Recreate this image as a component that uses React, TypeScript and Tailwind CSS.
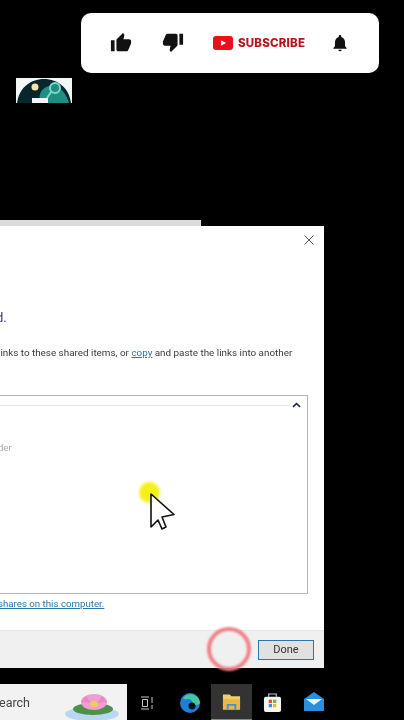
import { MdThumbUp, MdThumbDown, MdNotifications } from "react-icons/md";

const uiFont = { fontFamily: 'Roboto, "Noto Sans", sans-serif' };

const SubscribeCard = () => (
  <div className="ml-[81px] flex h-[60px] w-[298px] items-center rounded-[10px] bg-white text-black">
    <MdThumbUp className="ml-[29px] h-[22px] w-[22px] text-[#111]" />
    <MdThumbDown className="ml-[30px] mb-[2px] h-[22px] w-[22px] text-[#111]" />
    <svg viewBox="0 0 20 14" className="ml-[29px] h-[14px] w-[20px]">
      <rect width="20" height="14" rx="3" fill="#e8101a" />
      <path d="M8 4.2 L13 7 L8 9.8 Z" fill="#fff" />
    </svg>
    <span className="ml-[5px] mt-[2px] font-['Inter',sans-serif] text-[11.5px] font-extrabold tracking-[0.2px] text-[#b5141c]">
      SUBSCRIBE
    </span>
    <MdNotifications className="ml-[25px] h-[20px] w-[20px] text-[#111]" />
  </div>
);

const ChannelLogo = () => (
  <svg viewBox="0 0 56 25" className="ml-[16px] mt-[5px] block h-[25px] w-[56px]">
    <rect width="56" height="25" fill="#f1f8f6" />
    <path d="M1 25 C3 10 14 1 28 1 C42 1 53 10 55 25 Z" fill="#08262b" />
    <path d="M24 25 C22 14 27 9 34 8 C42 6 50 14 53 25 Z" fill="#1c8f80" />
    <circle cx="19" cy="9" r="3.5" fill="#f4e5b0" />
    <circle cx="39" cy="10" r="5" fill="#1c8f80" stroke="#7fd8cc" strokeWidth="2" />
    <path d="M35 14 L31 20" stroke="#7fd8cc" strokeWidth="2" />
    <rect x="16" y="20" width="16" height="5" fill="#eef6f6" />
  </svg>
);

const ShareDialog = () => (
  <div className="flex h-[442px] w-[324px] flex-col bg-white" style={uiFont}>
    <div className="flex h-[404px] flex-col">
      <div className="flex justify-end pr-[9px] pt-[8px]">
        <svg viewBox="0 0 12 12" className="h-[12px] w-[12px]" fill="none" stroke="#555" strokeWidth="1">
          <path d="M1.5 1.5 L10.5 10.5 M10.5 1.5 L1.5 10.5" />
        </svg>
      </div>
      <p className="ml-[-4px] mt-[63px] text-[13px] leading-[18px] text-[#3a4070]">d.</p>
      <p className="ml-[-2px] mt-[18px] whitespace-nowrap text-[9.87px] leading-[16px] text-[#3a3a3a]">
        links to these shared items, or{" "}
        <span className="text-[#2a75a8] underline">copy</span> and paste the links into another
      </p>
      <div className="mt-[34px] h-[199px] w-[308px] border border-l-0 border-[#b4b4b4]">
        <div className="flex h-[19px] items-center justify-between pr-[6px]">
          <div className="h-px w-[288px] bg-[#e4e6f2]" />
          <svg viewBox="0 0 10 6" className="mb-[1px] h-[6px] w-[9px]" fill="none" stroke="#1c2c4c" strokeWidth="1.8">
            <path d="M1 5 L5 1.5 L9 5" />
          </svg>
        </div>
        <p className="ml-[-2px] mt-[26px] text-[9.5px] leading-[14px] text-[#a8a8a8]">der</p>
      </div>
      <p className="ml-[-2px] mt-[2px] whitespace-nowrap text-[9.7px] leading-[15px] text-[#2a75a8] underline">
        shares on this computer.
      </p>
    </div>
    <div className="flex h-[38px] items-center justify-end border-t border-[#e8e8e8] bg-[#f0f0f0] pr-[10px]">
      <button className="h-[20px] w-[56px] border border-[#2b74ac] bg-[#e1e1e1] text-[11px] leading-[17px] text-[#333]">
        Done
      </button>
    </div>
  </div>
);

const Lotus = () => (
  <svg viewBox="0 0 56 26" className="h-[26px] w-[56px]">
    <ellipse cx="28" cy="20" rx="27" ry="7" fill="#b9d8ef" />
    <ellipse cx="29" cy="15" rx="20" ry="6" fill="#4f8f4c" />
    <ellipse cx="30" cy="8" rx="13" ry="8" fill="#ee9fd0" />
    <ellipse cx="30" cy="10" rx="4" ry="3" fill="#f5c860" />
    <path d="M22 2 L27 9 L17 8 Z M38 2 L33 9 L43 8 Z" fill="#e78ac4" />
  </svg>
);

const Taskbar = () => (
  <div className="mt-[16px] flex h-[36px] items-stretch" style={uiFont}>
    <div className="flex w-[127px] items-center justify-between bg-[#f2f2f2] pr-[7px]">
      <span className="ml-[-1px] mt-[2px] text-[12.5px] text-[#444]">earch</span>
      <div className="mt-[10px]">
        <Lotus />
      </div>
    </div>
    <div className="flex w-[40px] items-center justify-center pt-[2px]">
      <svg viewBox="0 0 14 14" className="h-[14px] w-[14px]" fill="none" stroke="#c8c8c8" strokeWidth="1">
        <path d="M1 1 H9 M1 13 H9 M2.5 3.5 H7.5 V10.5 H2.5 Z M12 1 V7 M12 9 V13" />
      </svg>
    </div>
    <div className="flex w-[45px] items-center justify-center pt-[1px]">
      <svg viewBox="0 0 20 20" className="h-[20px] w-[20px]">
        <circle cx="10" cy="10" r="10" fill="#1f7fd6" />
        <path d="M3 5 C7 -1 18 0 20 9 C20 12 16 13 12 12 C14 9 11 6 8 6 C6 6 4 7 3 5 Z" fill="#43c8a0" />
        <circle cx="12" cy="13" r="3.5" fill="#06121c" />
      </svg>
    </div>
    <div className="ml-[-1px] flex w-[41px] items-center justify-center border-b border-[#888] bg-[#333]">
      <svg viewBox="0 0 20 18" className="h-[18px] w-[19px]">
        <path d="M1 1 H8 L10 3 H19 V17 H1 Z" fill="#f3cd66" />
        <path d="M1 6 H19 V17 H1 Z" fill="#e8b84f" />
        <path d="M5 17 V11 H15 V17 H13 V13 H7 V17 Z" fill="#4a90c8" />
      </svg>
    </div>
    <div className="flex w-[40px] items-center justify-center">
      <svg viewBox="0 0 20 22" className="h-[21px] w-[19px]">
        <path d="M6 5 V2 H14 V5" fill="none" stroke="#bcd" strokeWidth="1.2" />
        <rect x="1" y="5" width="18" height="16" rx="2" fill="#f5f5f5" />
        <rect x="6" y="8" width="3.5" height="3.5" fill="#e2512a" />
        <rect x="10.5" y="8" width="3.5" height="3.5" fill="#7db53b" />
        <rect x="6" y="12.5" width="3.5" height="3.5" fill="#2a9ae0" />
        <rect x="10.5" y="12.5" width="3.5" height="3.5" fill="#f4b81f" />
      </svg>
    </div>
    <div className="ml-[2px] flex w-[40px] items-center justify-center">
      <svg viewBox="0 0 20 20" className="h-[20px] w-[20px]">
        <path d="M10 0 L20 7 V19 H0 V7 Z" fill="#2b8fe0" />
        <path d="M2 7 H18 L10 13 Z" fill="#e8f4fc" />
      </svg>
    </div>
  </div>
);

export default function App() {
  return (
    <div className="relative h-[720px] w-[404px] overflow-hidden bg-black pt-[13px] blur-[0.4px]">
      <SubscribeCard />
      <ChannelLogo />
      <div className="mt-[117px] h-[6px] w-[201px] bg-[#dcdcdc]" />
      <ShareDialog />
      <Taskbar />

      {/* pointer highlight and click ring from the recording */}
      <div className="absolute left-[139px] top-[482px] h-[21px] w-[21px] rounded-full bg-[#f5f01c] blur-[1.5px]" />
      <svg viewBox="0 0 28 40" className="absolute left-[149px] top-[492px] h-[40px] w-[28px]">
        <path d="M2 2 L2 35 L9 28 L13 37 L17 35 L13 25 L25 22.5 Z" fill="#fff" stroke="#111" strokeWidth="1.6" strokeLinejoin="round" />
      </svg>
      <div className="absolute left-[207px] top-[627px] h-[44px] w-[44px] rounded-full border-[4px] border-[#ef8088] blur-[1px]" />
    </div>
  );
}
